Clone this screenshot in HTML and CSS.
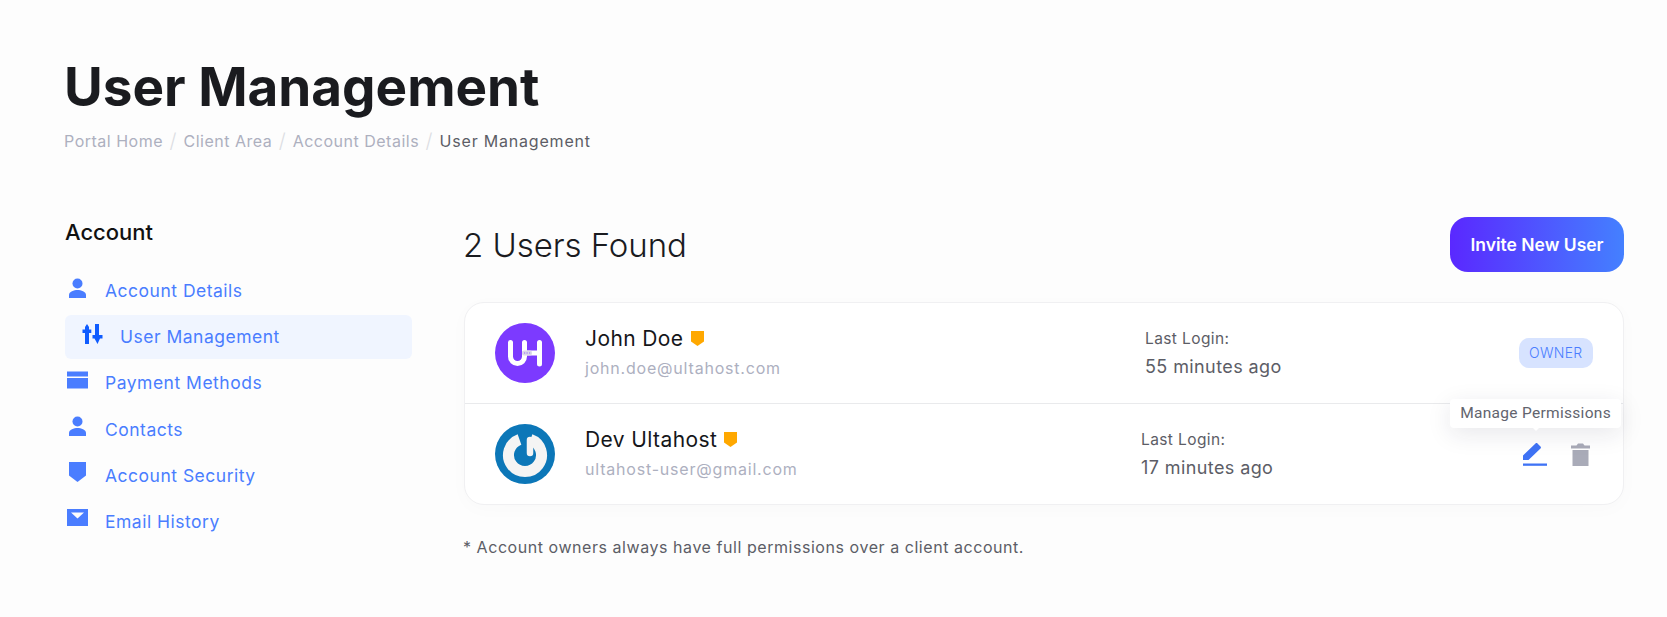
FILE: index.html
```html
<!DOCTYPE html>
<html lang="en">
<head>
    <meta charset="UTF-8">
    <meta name="viewport" content="width=device-width, initial-scale=1.0">
    <link rel="stylesheet" href="styles.css">
    <title>User Management</title>
</head>
<body>
    <header class="page-head">
        <h1>User Management</h1>
        <nav class="crumbs">
            <a href="#">Portal Home</a><span class="sep">/</span>
            <a href="#">Client Area</a><span class="sep">/</span>
            <a href="#">Account Details</a><span class="sep">/</span>
            <span class="current">User Management</span>
        </nav>
    </header>

    <div class="layout">
        <aside class="sidebar">
            <h3>Account</h3>
            <ul class="side-nav">
                <li><a href="#">
                    <svg class="nav-icon" viewBox="0 0 21 20"><circle cx="10.500" cy="5.500" r="5"/><path d="M2 20v-3c0-3.300 5-5 8.500-5s8.500 1.700 8.500 5v3z"/></svg>
                    Account Details</a></li>
                <li class="active"><a href="#">
                    <svg class="nav-icon" viewBox="0 0 21 20"><path d="M3 20V9H.500V5.500H3V3L5 0l2 3v2.500h2.300V9H7v11zM13 0h4v11h3.500v3.500H18L15.500 20 12.500 14.500H10.500V11H13z"/></svg>
                    User Management</a></li>
                <li><a href="#">
                    <svg class="nav-icon" viewBox="0 0 21 20"><path d="M0 1.500h21v5H0zM0 8h21v10.500H0z"/></svg>
                    Payment Methods</a></li>
                <li><a href="#">
                    <svg class="nav-icon" viewBox="0 0 21 20"><circle cx="10.500" cy="5.500" r="5"/><path d="M2 20v-3c0-3.300 5-5 8.500-5s8.500 1.700 8.500 5v3z"/></svg>
                    Contacts</a></li>
                <li><a href="#">
                    <svg class="nav-icon" viewBox="0 0 21 20"><path d="M2 0h17v13.500L10.500 20 2 13.500z"/></svg>
                    Account Security</a></li>
                <li><a href="#">
                    <svg class="nav-icon" viewBox="0 0 21 20"><path fill-rule="evenodd" d="M0 1h21v17H0zM4 4.500l6.500 6 6.500-6z"/></svg>
                    Email History</a></li>
            </ul>
        </aside>

        <main class="content">
            <div class="content-head">
                <h2>2 Users Found</h2>
                <a href="#" class="btn-invite">Invite New User</a>
            </div>

            <div class="users-card">
                <div class="user-row">
                    <svg class="avatar" viewBox="0 0 60 60">
                        <circle cx="30" cy="30" r="30" fill="#7c3aff"/>
                        <path d="M15.500 19.500v14a7 7 0 0 0 14 0V19.500M44.500 19.500v21.500M30 30h14.500" fill="none" stroke="#fff" stroke-width="5" stroke-linecap="round"/>
                        <rect x="27" y="27.500" width="10" height="5" rx="2" fill="#dcd8e8"/>
                        <path d="M29 30h1.200M31.500 30h1.200M34 30h1.200" stroke="#8f63ff" stroke-width="1.200"/>
                    </svg>
                    <div class="user-info">
                        <div class="user-name">John Doe <svg class="shield" viewBox="0 0 13 15"><path d="M0 0h13v10.500L6.500 15 0 10.500z"/></svg></div>
                        <div class="user-email">john.doe@ultahost.com</div>
                    </div>
                    <div class="login">
                        <div class="login-label">Last Login:</div>
                        <div class="login-time">55 minutes ago</div>
                    </div>
                    <div class="user-actions"><span class="badge">OWNER</span></div>
                </div>

                <div class="user-row second">
                    <svg class="avatar" viewBox="0 0 60 60">
                        <circle cx="30" cy="30" r="30" fill="#0c77b8"/>
                        <path d="M24.500 15.500a16.500 16.500 0 1 0 11 0" fill="none" stroke="#f4f4f4" stroke-width="11"/>
                        <path d="M35 16v13" fill="none" stroke="#f4f4f4" stroke-width="6.500" stroke-linecap="round"/>
                    </svg>
                    <div class="user-info">
                        <div class="user-name">Dev Ultahost <svg class="shield" viewBox="0 0 13 15"><path d="M0 0h13v10.500L6.500 15 0 10.500z"/></svg></div>
                        <div class="user-email">ultahost-user@gmail.com</div>
                    </div>
                    <div class="login">
                        <div class="login-label">Last Login:</div>
                        <div class="login-time">17 minutes ago</div>
                    </div>
                    <div class="user-actions">
                        <a href="#" class="action-edit">
                            <svg viewBox="0 0 24 24"><path d="M0 13.500L12.500 1.500c.6-.6 1.400-.6 2 0l3 3c.6.6.6 1.400 0 2L5.500 18H0z"/><rect x="0" y="21.500" width="24" height="2.300"/></svg>
                        </a>
                        <a href="#" class="action-delete">
                            <svg viewBox="0 0 19 24"><path d="M0 3.500h5.500L7 1.500h5l1.500 2H19V6.500H0zM1.500 8h16v16h-16z"/></svg>
                        </a>
                        <div class="tooltip">Manage Permissions</div>
                    </div>
                </div>
            </div>

            <p class="footnote">* Account owners always have full permissions over a client account.</p>
        </main>
    </div>
</body>
</html>
```

FILE: styles.css
```css
/* Global Styles */
html, body {
    height: 100%;
    overflow: hidden;
}

body {
    font-family: Inter, "Noto Sans", sans-serif;
    margin: 0;
    padding: 0;
    background-color: #fdfdfd;
    color: #1a1b1f;
}

a {
    text-decoration: none;
}

/* Header */
.page-head {
    padding: 57px 0 0 64px;
}

.page-head h1 {
    margin: 0;
    font-size: 53px;
    line-height: 60px;
    font-weight: 700;
    color: #1a1b1f;
}

.crumbs {
    display: flex;
    align-items: center;
    margin-top: 12px;
    font-size: 16px;
    line-height: 24px;
    letter-spacing: 0.5px;
    color: #adb0bf;
}

.crumbs a {
    color: #adb0bf;
}

.crumbs .sep {
    margin: 0 6.500px;
    color: #dcdde3;
    font-size: 20px;
    font-weight: 300;
}

.crumbs .current {
    color: #5c5d66;
    letter-spacing: 0.8px;
}

/* Main layout */
.layout {
    display: flex;
    margin-top: 64px;
    padding: 0 43px 0 65px;
}

.sidebar {
    width: 347px;
    flex-shrink: 0;
    margin-right: 52px;
}

.sidebar h3 {
    margin: 0 0 23px;
    padding-top: 1px;
    font-size: 22px;
    line-height: 28px;
    font-weight: 500;
    color: #111;
}

.side-nav {
    list-style: none;
    margin: 0;
    padding: 0;
    display: flex;
    flex-direction: column;
    gap: 2.200px;
}

.side-nav a {
    display: flex;
    align-items: center;
    box-sizing: border-box;
    height: 44px;
    padding: 0 0 1px 2px;
    font-size: 17.500px;
    letter-spacing: 0.5px;
    color: #4a7dff;
}

.nav-icon {
    width: 21px;
    height: 20px;
    margin-right: 17px;
    margin-top: -6px;
    fill: #4a7dff;
    flex-shrink: 0;
}

.side-nav .active a {
    background-color: #f0f5ff;
    border-radius: 6px;
    padding-left: 17px;
}

.side-nav .active .nav-icon {
    fill: #0f5cff;
}

.content {
    flex: 1;
    min-width: 0;
}

.content-head {
    display: flex;
    align-items: center;
    justify-content: space-between;
    height: 55px;
}

.content-head h2 {
    margin: 0 0 0 -1px;
    font-size: 33px;
    font-weight: 300;
    letter-spacing: -0.05px;
    color: #1a1b1f;
}

.btn-invite {
    display: flex;
    align-items: center;
    justify-content: center;
    width: 174px;
    height: 55px;
    border-radius: 18px;
    background: linear-gradient(90deg, #5a28ff, #4480ff);
    color: #fff;
    font-size: 17.500px;
    font-weight: 600;
}

/* User list */
.users-card {
    margin-top: 30px;
    background-color: #fff;
    border: 1px solid #f0f0f2;
    border-radius: 20px;
    box-shadow: 0 4px 20px rgba(30, 30, 60, 0.02);
}

.user-row {
    position: relative;
    display: flex;
    align-items: center;
    height: 100px;
    padding: 0 30px;
}

.user-row.second {
    height: 100px;
    border-top: 1px solid #e9eaec;
}

.avatar {
    width: 60px;
    height: 60px;
    flex-shrink: 0;
    margin-right: 30px;
}

.user-info {
    flex: 1;
    margin-bottom: 3px;
}

.user-name {
    display: flex;
    align-items: center;
    gap: 7px;
    font-size: 21px;
    line-height: 30px;
    letter-spacing: 0.4px;
    color: #15161a;
}

.shield {
    width: 13px;
    height: 15px;
    fill: #ffa800;
}

.user-email {
    margin-top: 2px;
    font-size: 16px;
    line-height: 24px;
    letter-spacing: 0.8px;
    color: #adb0bf;
}

.login {
    width: 316px;
    flex-shrink: 0;
}

.second .login {
    margin-left: -4px;
    width: 320px;
}

.login-label {
    font-size: 15.500px;
    line-height: 24px;
    letter-spacing: 0.4px;
    color: #5c5d66;
}

.login-time {
    margin-top: 3px;
    font-size: 18px;
    line-height: 26px;
    letter-spacing: 0.4px;
    color: #5c5d66;
}

.user-actions {
    display: flex;
    align-items: center;
    justify-content: flex-end;
    gap: 24px;
    width: 132px;
}

.badge {
    padding: 0 10.500px;
    height: 30px;
    line-height: 30px;
    border-radius: 10px;
    background-color: #d7e3ff;
    color: #4a7dff;
    font-size: 14px;
    font-weight: 300;
    letter-spacing: 0.3px;
}

.action-edit svg {
    display: block;
    width: 24px;
    height: 24px;
    fill: #3f73f5;
}

.action-delete {
    margin-right: 3px;
}

.action-delete svg {
    display: block;
    width: 19px;
    height: 24px;
    fill: #a9abb8;
}

.tooltip {
    position: absolute;
    right: 2px;
    top: -5px;
    padding: 0 10px;
    height: 29px;
    line-height: 29px;
    background-color: #fff;
    border-radius: 4px;
    box-shadow: 0 6px 24px rgba(30, 30, 60, 0.1);
    font-family: Roboto, sans-serif;
    font-size: 15.500px;
    letter-spacing: 0.3px;
    color: #62646e;
}

.tooltip::after {
    content: "";
    position: absolute;
    left: 50%;
    bottom: -3px;
    margin-left: -3px;
    border: 3px solid transparent;
    border-top-color: #fff;
    border-bottom: 0;
}

.footnote {
    margin: 30px 0 0 -1px;
    font-size: 16px;
    line-height: 24px;
    letter-spacing: 0.55px;
    color: #5c5d66;
}
```
